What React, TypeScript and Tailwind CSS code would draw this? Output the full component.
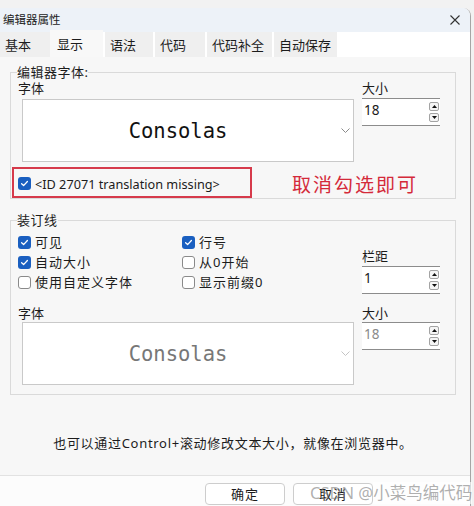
import React from "react";

const tabs = [
  { label: "基本", cls: "w-[50px] bg-[#efefef]" },
  { label: "显示", cls: "w-[53px] bg-[#f8f8f8] -mt-[2px] h-[27px] pl-[7px]" },
  { label: "语法", cls: "w-[48px] ml-[2px] bg-[#efefef] pl-[3px]" },
  { label: "代码", cls: "w-[50px] ml-[2px] bg-[#efefef]" },
  { label: "代码补全", cls: "w-[65px] ml-[2px] bg-[#efefef]" },
  { label: "自动保存", cls: "w-[63px] ml-[2px] bg-[#efefef] pl-[4px]" },
];

function Check({ on }: { on?: boolean }) {
  if (on) {
    return (
      <span className="flex h-[13px] w-[13px] shrink-0 items-center justify-center rounded-[3px] bg-[#1a5fc0]">
        <svg width="9" height="9" viewBox="0 0 9 9">
          <path d="M1.6 4.8 3.6 6.6 7.4 2.5" fill="none" stroke="white" strokeWidth="1.3" strokeLinecap="round" strokeLinejoin="round" />
        </svg>
      </span>
    );
  }
  return <span className="h-[13px] w-[13px] shrink-0 rounded-[3px] border border-[#8a8a8a] bg-white" />;
}

function Arrow({ up }: { up?: boolean }) {
  return (
    <span className="flex h-[9px] w-[10px] items-center justify-center rounded-[2px] border border-[#a3a3a3] bg-[#f5f5f5]">
      <svg width="5" height="3" viewBox="0 0 5 3">
        <path d={up ? "M0 3 2.5 0 5 3Z" : "M0 0 2.5 3 5 0Z"} fill="#111" />
      </svg>
    </span>
  );
}

function Spin({ value, dim }: { value: string; dim?: boolean }) {
  return (
    <div className="flex h-[28px] w-[78px] justify-between border-y border-[#8c8c8c] bg-white">
      <span className={`pl-[2px] pt-[2px] text-[13.5px] leading-[18px] ${dim ? "text-[#8a8a8a]" : "text-[#1a1a1a]"}`}>{value}</span>
      <div className="flex flex-col gap-[2px] pr-[1px] pt-[3px]">
        <Arrow up />
        <Arrow />
      </div>
    </div>
  );
}

function Combo({ dim }: { dim?: boolean }) {
  return (
    <div className="ml-[4px] flex h-[63px] w-[332px] items-center border border-[#c9c9c9] bg-white">
      <span
        className={`flex-1 pr-[8px] text-center font-['DejaVu_Sans_Mono',monospace] text-[20.5px] ${dim ? "text-[#777777]" : "text-[#111111]"}`}
      >
        Consolas
      </span>
      <svg width="9" height="5" viewBox="0 0 9 5" className="mr-[3px]">
        <path d="M0.5 0.5 4.5 4.5 8.5 0.5" fill="none" stroke={dim ? "#c4c4c4" : "#8a8a8a"} strokeWidth="1" />
      </svg>
    </div>
  );
}

function Box({ on, label }: { on?: boolean; label: string }) {
  return (
    <div className="flex h-[20px] items-center gap-[4px]">
      <Check on={on} />
      <span className="tracking-[1px]">{label}</span>
    </div>
  );
}

export default function App() {
  return (
    <div className="relative h-[506px] w-[474px] overflow-hidden bg-[#f2f2f2] pt-[8px] font-['Noto_Sans','Noto_Sans_CJK_SC',sans-serif] text-[13px] leading-[16px] text-[#1c1c1c]">
      <div className="flex h-[498px] w-[471px] flex-col overflow-hidden rounded-tr-[8px] border-r border-[#a6a6a6] bg-white">
        {/* title bar */}
        <div className="flex h-[24px] shrink-0 items-center justify-between bg-[#edf2f8] pl-[3px] pr-[10px]">
          <span className="text-[11.5px] text-[#222]">编辑器属性</span>
          <svg width="10" height="10" viewBox="0 0 10 10">
            <path d="M0.5 0.5 9.5 9.5M9.5 0.5 0.5 9.5" stroke="#333" strokeWidth="1.1" />
          </svg>
        </div>

        {/* tabs */}
        <div className="flex h-[25px] shrink-0 items-end bg-white">
          {tabs.map((t) => (
            <div key={t.label} className={`flex h-[25px] items-center pl-[5px] ${t.cls}`}>
              {t.label}
            </div>
          ))}
        </div>

        {/* content */}
        <div className="flex h-[418px] shrink-0 flex-col bg-[#f7f7f7] pl-[10px] pr-[14px] pt-[7px]">
          <fieldset className="border border-[#dadada] pl-[7px]">
            <legend className="-ml-[1px] tracking-[0.5px]">编辑器字体:</legend>
            <div className="flex">
              <div className="flex flex-col">
                <span>字体</span>
                <div className="mt-[3px]">
                  <Combo />
                </div>
              </div>
              <div className="ml-[8px] flex flex-col">
                <span>大小</span>
                <div className="mt-[2px]">
                  <Spin value="18" />
                </div>
              </div>
            </div>
            <div className="mt-[5px] flex items-center">
              <div className="-ml-[6px] flex h-[31px] w-[240px] items-center gap-[4px] border-2 border-[#d63a4b] pl-[4px] pt-[2px]">
                <Check on />
                <span className="text-[12.7px]">&lt;ID 27071 translation missing&gt;</span>
              </div>
              <span className="ml-[40px] pt-[4px] text-[19px] leading-[22px] tracking-[2px] text-[#d42a3a]">取消勾选即可</span>
            </div>
          </fieldset>

          <fieldset className="mt-[13px] border border-[#dadada] pb-[9px] pl-[7px]">
            <legend className="-ml-[1px] tracking-[0.5px]">装订线</legend>
            <div className="flex">
              <div className="flex w-[344px] pt-[4px]">
                <div className="flex w-[164px] flex-col">
                  <Box on label="可见" />
                  <Box on label="自动大小" />
                  <Box label="使用自定义字体" />
                </div>
                <div className="flex flex-col">
                  <Box on label="行号" />
                  <Box label="从0开始" />
                  <Box label="显示前缀0" />
                </div>
              </div>
              <div className="flex flex-col pt-[20px]">
                <span>栏距</span>
                <div className="mt-[2px]">
                  <Spin value="1" />
                </div>
              </div>
            </div>
            <div className="mt-[11px] flex">
              <div className="flex flex-col">
                <span>字体</span>
                <div className="mt-[1px]">
                  <Combo dim />
                </div>
              </div>
              <div className="ml-[8px] flex flex-col">
                <span>大小</span>
                <div className="mt-[1px]">
                  <Spin value="18" dim />
                </div>
              </div>
            </div>
          </fieldset>

          <p className="mt-[38px] text-center leading-[20px] tracking-[0.7px]">也可以通过Control+滚动修改文本大小，就像在浏览器中。</p>
        </div>

        {/* buttons */}
        <div className="flex flex-1 gap-[8px] border-t border-[#e2e2e2] bg-[#fcfcfc] pl-[205px] pt-[7px]">
          <button className="h-[22px] w-[80px] rounded-[4px] border border-[#cdcdcd] bg-white tracking-[1px]">确定</button>
          <button className="h-[22px] w-[80px] rounded-[4px] border border-[#cdcdcd] bg-white tracking-[1px]">取消</button>
        </div>
      </div>

      {/* watermark */}
      <div className="absolute left-[310px] top-[482px] flex items-center text-[16.5px] leading-[22px] text-[#7a7a7a]/60">
        <span>CSDN @</span>
        <span className="bg-white/60">小菜鸟编代码</span>
      </div>
    </div>
  );
}
